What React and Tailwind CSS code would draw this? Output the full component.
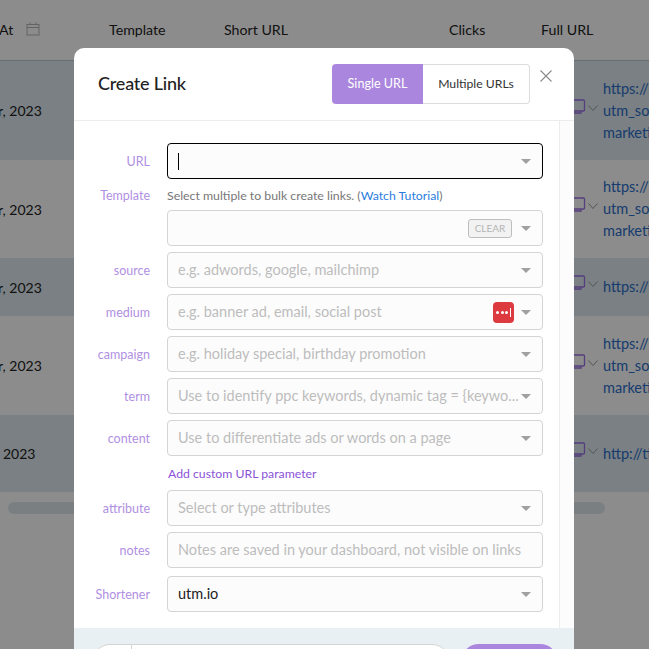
import React from "react";

function Caret() {
  return <span className="block w-0 h-0 border-x-[5px] border-x-transparent border-t-[5px] border-t-[#a0a0a0] shrink-0" />;
}

function Row({ label, placeholder, children, value, noCaret, active, className = "" }) {
  return (
    <div className={`flex items-center ${className}`}>
      <div className="w-[76px] pt-[2px] text-right text-[12.5px] text-[#b08fe2] shrink-0">{label}</div>
      <div className={`ml-[17px] w-[376px] h-[36px] rounded-[4px] bg-[#fcfcfc] flex items-center pl-[10px] pr-[11px] text-[14.5px] ${active ? "border border-black" : "border border-[#d4d4d4]"}`}>
        {active && <span className="w-px h-[17px] bg-black" />}
        {placeholder && <span className="text-[#bdbdbd] truncate">{placeholder}</span>}
        {value && <span className="text-[#222]">{value}</span>}
        {children}
        {!noCaret && <span className="ml-auto"><Caret /></span>}
      </div>
    </div>
  );
}

function Monitor() {
  return (
    <svg width="18" height="18" viewBox="0 0 18 18" fill="none" stroke="#9b72e6" strokeWidth="1.3" className="shrink-0">
      <rect x="4.5" y="1" width="12" height="11" rx="1" />
      <path d="M4.5 12 L4.5 14 H13 V12" />
    </svg>
  );
}

function Chevron() {
  return (
    <svg width="10" height="6" viewBox="0 0 10 6" fill="none" stroke="#999" strokeWidth="1" className="shrink-0">
      <path d="M0.5 0.5 L5 5.5 L9.5 0.5" />
    </svg>
  );
}

function TableRow({ h, dark, date, lines, narrow }) {
  return (
    <div className={`flex items-center overflow-hidden ${dark ? "bg-[#dfe9ee]" : "bg-white"}`} style={{ height: h }}>
      <div className={`shrink-0 w-[60px] text-[14px] text-[#222] whitespace-nowrap ${narrow ? "pl-[3px]" : "-ml-[2px] mr-[2px]"}`}>{date}</div>
      <div className="ml-[508px] -mt-[6px] flex items-center gap-[2px] shrink-0">
        <Monitor />
        <Chevron />
      </div>
      <div className="ml-[5px] text-[14.5px] leading-[22px] text-[#2a6ec9] whitespace-nowrap">
        {lines.map((l) => (
          <div key={l}>{l}</div>
        ))}
      </div>
    </div>
  );
}

export default function App() {
  const three = ["https://utm.io", "utm_source=", "marketing"];
  return (
    <div className="relative h-screen overflow-hidden bg-white" style={{ fontFamily: 'Lato, sans-serif' }}>
      <div className="flex items-center h-[61px] border-b border-[#b9cdd6] text-[14.2px] text-[#222] whitespace-nowrap">
        <span className="w-[27px] -ml-px">At</span>
        <svg width="14" height="14" viewBox="0 0 14 14" fill="none" stroke="#b5b5b5" strokeWidth="1" className="shrink-0 -mt-[2px]">
          <rect x="1" y="2.5" width="12" height="10.5" />
          <path d="M1 5.5 H13 M4 0.5 V3 M10 0.5 V3" />
        </svg>
        <span className="ml-[69px] w-[115px]">Template</span>
        <span className="w-[225px]">Short URL</span>
        <span className="w-[92px]">Clicks</span>
        <span>Full URL</span>
      </div>
      <TableRow h={99} dark date="r, 2023" lines={three} />
      <TableRow h={98} date="r, 2023" lines={three} />
      <TableRow h={58} dark date="r, 2023" lines={["https://utm.io"]} />
      <TableRow h={99} date="r, 2023" lines={three} />
      <TableRow h={77} dark narrow date="2023" lines={["http://tiny"]} />
      <div className="mt-[10px] ml-[8px] w-[597px] h-[12px] rounded-full bg-[#dfe8ec]" />

      <div className="absolute inset-0 bg-black/45" />

      <div className="absolute left-[74px] top-[48px] w-[500px] h-[640px] bg-white rounded-[10px] flex flex-col overflow-hidden">
        <div className="h-[73px] shrink-0 border-b border-[#ececec] flex items-start pl-[24px]">
          <div className="mt-[22px] w-[234px] text-[18px] font-medium text-[#222] tracking-[-0.2px]">Create Link</div>
          <div className="mt-[16px] flex h-[40px]">
            <div className="w-[91px] text-[12.6px] bg-[#ab86de] text-white rounded-l-[4px] flex items-center justify-center">Single URL</div>
            <div className="w-[107px] text-[12.2px] bg-white text-[#333] border border-l-0 border-[#dcdcdc] rounded-r-[4px] flex items-center justify-center">Multiple URLs</div>
          </div>
          <svg width="14" height="14" viewBox="0 0 14 14" fill="none" stroke="#8a8a8a" strokeWidth="1.1" className="ml-[9px] mt-[21px]">
            <path d="M1.5 1.5 L12.5 12.5 M12.5 1.5 L1.5 12.5" />
          </svg>
        </div>
        <div className="flex h-[507px] shrink-0">
          <div className="w-[485px] pt-[22px] flex flex-col">
            <Row label="URL" active />
            <div className="flex items-center mt-[8px] h-[18px]">
              <div className="w-[76px] text-right text-[12.5px] text-[#b08fe2] shrink-0">Template</div>
              <div className="ml-[17px] text-[12.3px] text-[#777] whitespace-nowrap">
                Select multiple to bulk create links. (<span className="text-[#2b7de0]">Watch Tutorial</span>)
              </div>
            </div>
            <Row label="" noCaret className="mt-[5px]">
              <span className="ml-auto mr-[-1px] h-[19px] w-[44px] rounded-[3px] border border-[#bdbdbd] bg-[#f2f2f2] text-[10px] text-[#b5b5b5] flex items-center justify-center">CLEAR</span>
              <span className="ml-[10px]"><Caret /></span>
            </Row>
            <Row label="source" placeholder="e.g. adwords, google, mailchimp" className="mt-[6px]" />
            <Row label="medium" placeholder="e.g. banner ad, email, social post" noCaret className="mt-[6px]">
              <span className="ml-auto w-[21px] h-[21px] rounded-[4px] bg-[#dc3a3f] flex items-center justify-center gap-[1.5px] shrink-0">
                <i className="w-[3px] h-[3px] rounded-full bg-white" />
                <i className="w-[3px] h-[3px] rounded-full bg-white" />
                <i className="w-[3px] h-[3px] rounded-full bg-white" />
                <i className="w-px h-[9px] bg-white" />
              </span>
              <span className="ml-[7px]"><Caret /></span>
            </Row>
            <Row label="campaign" placeholder="e.g. holiday special, birthday promotion" className="mt-[6px]" />
            <Row label="term" placeholder="Use to identify ppc keywords, dynamic tag = {keywo..." className="mt-[6px]" />
            <Row label="content" placeholder="Use to differentiate ads or words on a page" className="mt-[6px]" />
            <div className="ml-[94px] mt-[10px] h-[16px] leading-[16px] text-[12.25px] text-[#8a52d8] whitespace-nowrap">Add custom URL parameter</div>
            <Row label="attribute" placeholder="Select or type attributes" className="mt-[8px]" />
            <Row label="notes" placeholder="Notes are saved in your dashboard, not visible on links" noCaret className="mt-[6px]" />
            <Row label="Shortener" value="utm.io" className="mt-[8px]" />
          </div>
          <div className="w-[15px] border-l border-[#ececec] bg-[#fcfcfc]" />
        </div>
        <div className="flex-1 bg-[#e8f0f3] flex items-start pt-[16px] pl-[18px]">
          <div className="w-[358px] h-[40px] bg-white border border-[#d4d4d4] rounded-[18px] flex">
            <div className="w-[39px] border-r border-[#d4d4d4]" />
          </div>
          <div className="ml-[11px] w-[97px] h-[40px] rounded-[18px] bg-[#ab86de]" />
        </div>
      </div>
    </div>
  );
}
